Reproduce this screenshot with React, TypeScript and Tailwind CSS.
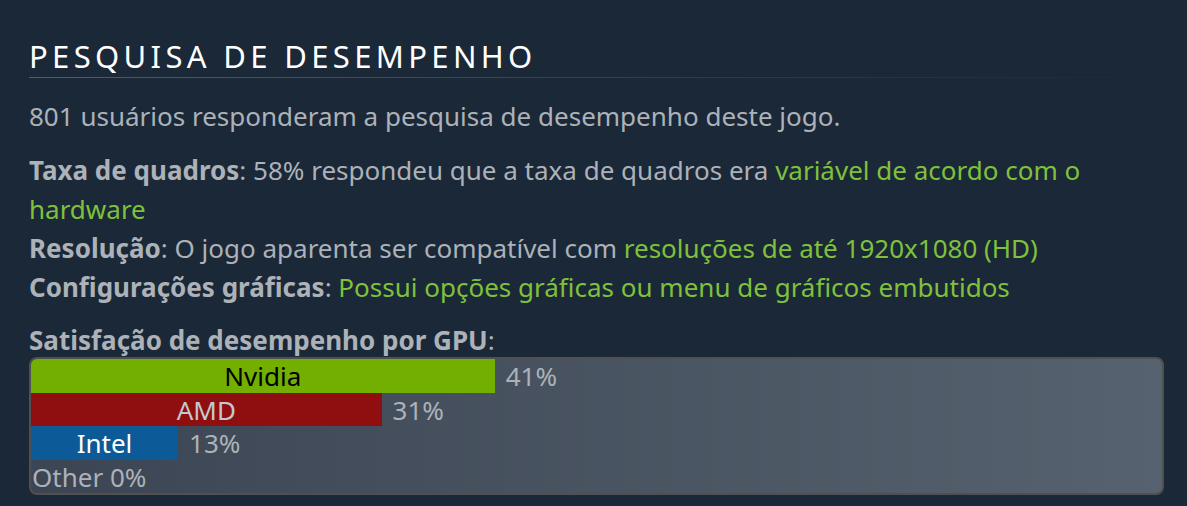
import React from "react";

type GpuRow = {
    name: string;
    pct: number;
    barClass: string;
    labelClass: string;
};

const gpuRows: GpuRow[] = [
    { name: "Nvidia", pct: 41, barClass: "bg-[#72af00]", labelClass: "text-black" },
    { name: "AMD", pct: 31, barClass: "bg-[#8f0f11]", labelClass: "text-[#c3c8ce]" },
    { name: "Intel", pct: 13, barClass: "bg-[#0c5a97]", labelClass: "text-white" },
];

const Label = ({ children }: { children: React.ReactNode }) => (
    <span className="font-bold">{children}</span>
);

const Green = ({ children }: { children: React.ReactNode }) => (
    <span className="text-[#7fc13a]">{children}</span>
);

const App = () => {
    return (
        <div
            className="min-h-screen w-full bg-[#1b2838] pl-[29px] pr-[23px] pt-[36px] text-[26px] text-[#acb2b8]"
            style={{ fontFamily: '"Noto Sans", "Liberation Sans", sans-serif' }}
        >
            <h2 className="text-[31px] leading-[40px] tracking-[0.14em] text-white font-normal">
                PESQUISA DE DESEMPENHO
            </h2>
            <div className="h-px mt-[1px] bg-gradient-to-r from-[#3d6282] via-[#2b4259] to-transparent" />

            <p className="mt-[19px] leading-[39px]">
                801 usuários responderam a pesquisa de desempenho deste jogo.
            </p>

            <div className="mt-[15px] leading-[39px]">
                <div>
                    <Label>Taxa de quadros</Label>: 58% respondeu que a taxa de quadros era{" "}
                    <Green>variável de acordo com o hardware</Green>
                </div>
                <div>
                    <Label>Resolução</Label>: O jogo aparenta ser compatível com{" "}
                    <Green>resoluções de até 1920x1080 (HD)</Green>
                </div>
                <div>
                    <Label>Configurações gráficas</Label>:{" "}
                    <Green>Possui opções gráficas ou menu de gráficos embutidos</Green>
                </div>
            </div>

            <div className="mt-[19px] leading-[28px]">
                <Label>Satisfação de desempenho por GPU</Label>:
            </div>

            <div className="mt-[3px] overflow-hidden rounded-[8px] border-2 border-[#505050] bg-gradient-to-r from-[#3c4553] to-[#56626f]">
                {gpuRows.map((row) => (
                    <div key={row.name} className="flex h-[33.5px] items-center">
                        <div
                            className={`${row.barClass} ${row.labelClass} flex h-full items-center justify-center pt-[2px]`}
                            style={{ width: `${row.pct}%` }}
                        >
                            {row.name}
                        </div>
                        <span className="ml-[11px] pt-[2px]">{row.pct}%</span>
                    </div>
                ))}
                <div className="flex h-[33.5px] items-center pl-[1px] pt-[2px]">Other 0%</div>
            </div>
        </div>
    );
};

export default App;
